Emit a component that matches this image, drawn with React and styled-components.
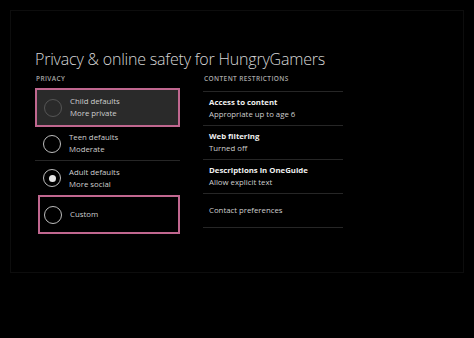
import React from 'react';
import styled, { createGlobalStyle } from 'styled-components';

const GlobalStyle = createGlobalStyle`
  html, body {
    margin: 0;
    padding: 0;
    background: #000;
    font-family: "Open Sans", "Noto Sans", sans-serif;
  }
`;

const Screen = styled.div`
  width: 474px;
  height: 338px;
  background: #000;
  padding: 10px;
  box-sizing: border-box;
`;

const Frame = styled.div`
  height: 263px;
  border: 1px solid #0d0d0d;
  box-sizing: border-box;
  padding: 37px 0 0 24px;
`;

const Title = styled.h1`
  margin: 0;
  font-size: 16px;
  font-weight: 300;
  color: #d6d6d6;
  line-height: 22px;
  letter-spacing: -0.2px;
`;

const Columns = styled.div`
  display: grid;
  grid-template-columns: 145px 140px;
  column-gap: 23px;
  margin-top: 4px;
`;

const Heading = styled.div`
  font-size: 6.5px;
  font-weight: 600;
  letter-spacing: 0.4px;
  color: #a8a8a8;
  text-transform: uppercase;
  line-height: 10px;
  padding-left: 1px;
  height: 14px;
`;

const OptionList = styled.div`
  display: flex;
  flex-direction: column;
`;

const Option = styled.div`
  display: flex;
  align-items: center;
  gap: 8px;
  height: ${p => p.$tall ? 39 : 34}px;
  box-sizing: border-box;
  padding-left: ${p => p.$boxed ? (p.$inset ? 4 : 7) : 8}px;
  margin-left: ${p => p.$inset ? 3 : 0}px;
  background: ${p => p.$selected ? '#2a2a2a' : 'transparent'};
  border: ${p => p.$boxed ? '2px solid #c0678f' : 'none'};
  border-bottom: ${p => p.$boxed ? '2px solid #c0678f' : p.$divider ? '1px solid #262626' : 'none'};
`;

const Radio = styled.span`
  width: 18px;
  height: 18px;
  border-radius: 50%;
  border: 1.5px solid ${p => p.$dim ? '#555' : '#bdbdbd'};
  box-sizing: border-box;
  display: flex;
  align-items: center;
  justify-content: center;
  flex-shrink: 0;
`;

const Dot = styled.span`
  width: 7px;
  height: 7px;
  border-radius: 50%;
  background: #e6e6e6;
`;

const Labels = styled.div`
  display: flex;
  flex-direction: column;
  gap: 1px;
`;

const Label = styled.span`
  font-size: 7.8px;
  line-height: 11px;
  color: ${p => p.$strong ? '#f0f0f0' : '#cfcfcf'};
  font-weight: ${p => p.$strong ? 700 : 400};
`;

const RestrictionList = styled.div`
  display: flex;
  flex-direction: column;
  border-top: 1px solid #262626;
  margin-top: 3px;
`;

const Restriction = styled.div`
  height: 34px;
  box-sizing: border-box;
  border-bottom: 1px solid #262626;
  padding-left: 6px;
  display: flex;
  flex-direction: column;
  justify-content: center;
  gap: 1px;
`;

const privacyOptions = [
  { title: 'Child defaults', sub: 'More private', selected: true, boxed: true, tall: true },
  { title: 'Teen defaults', sub: 'Moderate', divider: true },
  { title: 'Adult defaults', sub: 'More social', checked: true },
  { title: 'Custom', boxed: true, inset: true, tall: true },
];

const restrictions = [
  { title: 'Access to content', sub: 'Appropriate up to age 6' },
  { title: 'Web filtering', sub: 'Turned off' },
  { title: 'Descriptions in OneGuide', sub: 'Allow explicit text' },
  { sub: 'Contact preferences' },
];

export default function App() {
  return (
    <Screen>
      <GlobalStyle />
      <Frame>
        <Title>Privacy &amp; online safety for HungryGamers</Title>
        <Columns>
          <div>
            <Heading>Privacy</Heading>
            <OptionList>
              {privacyOptions.map((o) => (
                <Option key={o.title} $selected={o.selected} $boxed={o.boxed} $tall={o.tall} $inset={o.inset} $divider={o.divider}>
                  <Radio $dim={o.selected}>{o.checked && <Dot />}</Radio>
                  <Labels>
                    <Label>{o.title}</Label>
                    {o.sub && <Label>{o.sub}</Label>}
                  </Labels>
                </Option>
              ))}
            </OptionList>
          </div>
          <div>
            <Heading>Content restrictions</Heading>
            <RestrictionList>
              {restrictions.map((r) => (
                <Restriction key={r.sub}>
                  {r.title && <Label $strong>{r.title}</Label>}
                  <Label>{r.sub}</Label>
                </Restriction>
              ))}
            </RestrictionList>
          </div>
        </Columns>
      </Frame>
    </Screen>
  );
}
